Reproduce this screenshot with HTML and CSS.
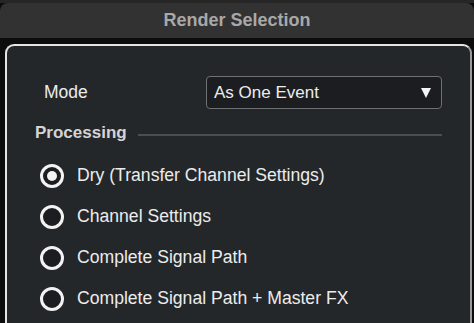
FILE: index.html
```html
<!DOCTYPE html>
<html lang="en">
<head>
    <meta charset="UTF-8">
    <meta name="viewport" content="width=device-width, initial-scale=1.0">
    <title>Render Selection</title>
    <link rel="stylesheet" href="styles.css">
</head>
<body>
    <div class="top-strip"></div>
    <div class="title-bar">Render Selection</div>

    <div class="panel">
        <div class="mode-row">
            <span class="mode-label">Mode</span>
            <div class="dropdown">
                <span>As One Event</span>
                <span class="arrow"></span>
            </div>
        </div>

        <div class="section-head">
            <span>Processing</span>
            <div class="rule"></div>
        </div>

        <div class="options">
            <label class="option"><span class="radio checked"></span>Dry (Transfer Channel Settings)</label>
            <label class="option"><span class="radio"></span>Channel Settings</label>
            <label class="option"><span class="radio"></span>Complete Signal Path</label>
            <label class="option"><span class="radio"></span>Complete Signal Path + Master FX</label>
        </div>
    </div>
</body>
</html>
```

FILE: styles.css
```css
body {
    font-family: "Liberation Sans", Arial, sans-serif;
    background-color: #0c0c0c;
    margin: 0;
    padding: 0;
    height: 323px;
    overflow: hidden;
}
.top-strip {
    height: 3px;
    background: #262626;
}
.title-bar {
    height: 35px;
    line-height: 34px;
    background: #323232;
    border-radius: 8px 8px 0 0;
    text-align: center;
    color: #a8a8a8;
    font-size: 18px;
    font-weight: bold;
}
.panel {
    margin: 6px 2px 0 5px;
    height: 279px;
    box-sizing: border-box;
    overflow: hidden;
    background: #24272a;
    border: 2px solid #e4e4e4;
    border-right-color: #9a9a9a;
    border-bottom: none;
    border-radius: 9px 9px 0 0;
    padding: 30px 28px 0 28px;
    color: #ececec;
}
.mode-row {
    display: flex;
    align-items: center;
    padding-left: 9px;
}
.mode-label {
    font-size: 17.5px;
}
.dropdown {
    margin-left: auto;
    width: 236px;
    height: 33px;
    box-sizing: border-box;
    border: 1px solid #6e7073;
    border-radius: 4px;
    background: #1b1d20;
    display: flex;
    align-items: center;
    justify-content: space-between;
    padding: 0 10px 0 7px;
    font-size: 17px;
}
.arrow {
    width: 0;
    height: 0;
    border-left: 5px solid transparent;
    border-right: 5px solid transparent;
    border-top: 10px solid #f4f4f4;
}
.section-head {
    display: flex;
    align-items: center;
    gap: 11px;
    margin-top: 14px;
    font-size: 17px;
    font-weight: bold;
    color: #d4d4d4;
    line-height: 20px;
}
.rule {
    flex: 1;
    height: 2px;
    margin-top: 3px;
    background: #4b4e51;
}
.options {
    display: flex;
    flex-direction: column;
    margin-top: 12px;
}
.option {
    display: flex;
    align-items: center;
    height: 41px;
    gap: 13px;
    font-size: 17.6px;
}
.radio {
    width: 24px;
    height: 24px;
    box-sizing: border-box;
    margin-left: 5px;
    border: 3px solid #f2f2f2;
    border-radius: 50%;
    background: #1b1d20;
    display: flex;
    align-items: center;
    justify-content: center;
}
.radio.checked::after {
    content: "";
    width: 10px;
    height: 10px;
    border-radius: 50%;
    background: #f2f2f2;
}
```
